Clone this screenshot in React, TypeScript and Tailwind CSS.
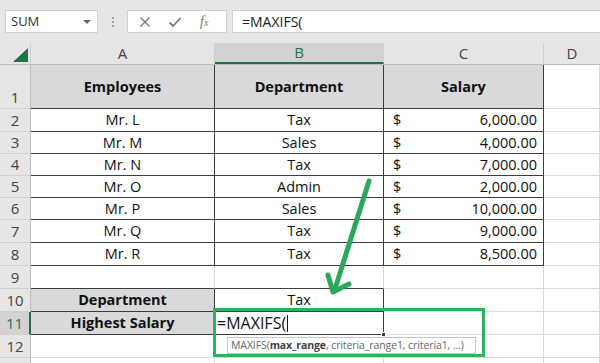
import React from 'react';

type Kind = 'head' | 'data' | 'gap' | 'dept' | 'high' | 'empty';

interface Row {
  n: number;
  h: string;
  kind: Kind;
  a?: string;
  b?: string;
  amt?: string;
}

const rows: Row[] = [
  { n: 1, h: 'h-[44px]', kind: 'head', a: 'Employees', b: 'Department', amt: 'Salary' },
  { n: 2, h: 'h-[23px]', kind: 'data', a: 'Mr. L', b: 'Tax', amt: '6,000.00' },
  { n: 3, h: 'h-[22px]', kind: 'data', a: 'Mr. M', b: 'Sales', amt: '4,000.00' },
  { n: 4, h: 'h-[22px]', kind: 'data', a: 'Mr. N', b: 'Tax', amt: '7,000.00' },
  { n: 5, h: 'h-[22px]', kind: 'data', a: 'Mr. O', b: 'Admin', amt: '2,000.00' },
  { n: 6, h: 'h-[22px]', kind: 'data', a: 'Mr. P', b: 'Sales', amt: '10,000.00' },
  { n: 7, h: 'h-[23px]', kind: 'data', a: 'Mr. Q', b: 'Tax', amt: '9,000.00' },
  { n: 8, h: 'h-[23px]', kind: 'data', a: 'Mr. R', b: 'Tax', amt: '8,500.00' },
  { n: 9, h: 'h-[23px]', kind: 'gap' },
  { n: 10, h: 'h-[23px]', kind: 'dept', a: 'Department', b: 'Tax' },
  { n: 11, h: 'h-[23px]', kind: 'high', a: 'Highest Salary', b: '=MAXIFS(' },
  { n: 12, h: 'h-[23px]', kind: 'empty' },
  { n: 13, h: 'h-[23px]', kind: 'empty' },
];

const dark = 'border-[#3c3c3c]';
const grid = 'border-[#dadada]';

function RowHeader({ n }: { n: number }) {
  const selected = n === 11;
  return (
    <div
      className={`w-[31px] shrink-0 flex items-end justify-center pb-[1px] text-[15px] leading-[19px] border-b border-b-[#d0d0d0] ${
        selected
          ? 'bg-[#d2d2d2] text-[#217346] border-r-2 border-r-[#217346]'
          : 'bg-[#e6e6e6] text-[#444] border-r border-r-[#bdbdbd]'
      }`}
    >
      {n < 13 ? n : null}
    </div>
  );
}

function SheetRow({ row }: { row: Row }) {
  const { kind } = row;
  const inTable = kind === 'head' || kind === 'data';
  const boxed = kind === 'dept' || kind === 'high';

  const aBorder =
    inTable || boxed
      ? `border-r border-b ${dark}`
      : kind === 'gap'
        ? `border-r ${grid} border-b border-b-[#3c3c3c]`
        : `border-r border-b ${grid}`;
  const cBorder = inTable ? `border-r border-b ${dark}` : `border-r border-b ${grid}`;
  const grayBg = kind === 'head' || boxed ? 'bg-[#d9d9d9]' : 'bg-white';

  return (
    <div className={`flex ${row.h}`}>
      <RowHeader n={row.n} />
      <div
        className={`w-[184px] shrink-0 flex items-center justify-center text-[#111] ${aBorder} ${grayBg} ${
          kind === 'head' || boxed ? 'font-bold text-[14.5px]' : 'text-[14.5px]'
        }`}
      >
        {row.a}
      </div>
      <div
        className={`w-[169px] shrink-0 flex items-center text-[14.5px] text-[#111] ${aBorder} ${
          kind === 'head' ? 'bg-[#d9d9d9] font-bold' : 'bg-white'
        } ${kind === 'high' ? 'justify-start pl-[2px] relative' : 'justify-center'}`}
      >
        {kind === 'high' ? (
          <>
            <span className="text-[16px]">{row.b}</span>
            <span className="w-px h-[17px] bg-[#111] ml-[1px]" />
            <span className="absolute right-[-3px] bottom-[-3px] w-[5px] h-[5px] bg-[#3c3c3c] border border-white" />
          </>
        ) : (
          row.b
        )}
      </div>
      <div
        className={`w-[160px] shrink-0 flex items-center text-[14.5px] text-[#111] ${cBorder} ${
          kind === 'head' ? 'bg-[#d9d9d9] font-bold justify-center' : 'bg-white justify-between pl-[9px] pr-[6px]'
        }`}
      >
        {kind === 'head' ? row.amt : kind === 'data' ? (
          <>
            <span>$</span>
            <span>{row.amt}</span>
          </>
        ) : null}
      </div>
      <div className={`flex-1 bg-white border-r border-b ${grid}`} />
    </div>
  );
}

function Toolbar() {
  return (
    <div className="h-[43px] bg-[#e6e6e6] flex items-center pl-[5px]">
      <div className="w-[93px] h-[23px] bg-white border border-[#d0d0d0] flex items-center justify-between pl-[5px] pr-[6px]">
        <span className="text-[13px] text-[#333]">SUM</span>
        <span className="w-0 h-0 border-l-[4px] border-r-[4px] border-t-[4px] border-l-transparent border-r-transparent border-t-[#666]" />
      </div>
      <div className="w-[29px] flex flex-col items-center gap-[2px]">
        <span className="w-[2px] h-[2px] bg-[#a0a0a0]" />
        <span className="w-[2px] h-[2px] bg-[#a0a0a0]" />
        <span className="w-[2px] h-[2px] bg-[#a0a0a0]" />
      </div>
      <div className="w-[100px] h-[23px] bg-white border border-[#d0d0d0] flex items-center pl-[11px] gap-[17px]">
        <svg width="12" height="12" viewBox="0 0 12 12">
          <path d="M1.5 1.5 L10.5 10.5 M10.5 1.5 L1.5 10.5" stroke="#7a7a7a" strokeWidth="1.4" fill="none" />
        </svg>
        <svg width="14" height="12" viewBox="0 0 14 12">
          <path d="M1.5 6.5 L5 10 L12.5 2" stroke="#7a7a7a" strokeWidth="1.8" fill="none" />
        </svg>
        <span className="font-['Liberation_Serif',serif] italic text-[14px] text-[#777] leading-none ml-[1px]">
          f<span className="text-[10px]">x</span>
        </span>
      </div>
      <div className="ml-[5px] flex-1 h-[23px] bg-white border-y border-l border-[#d0d0d0] flex items-center pl-[9px]">
        <span className="text-[14px] text-[#222]">=MAXIFS(</span>
      </div>
    </div>
  );
}

function ColumnHeaders() {
  const cols = [
    { l: 'A', w: 'w-[184px]', sel: false },
    { l: 'B', w: 'w-[169px]', sel: true },
    { l: 'C', w: 'w-[160px]', sel: false },
  ];
  return (
    <div className="h-[22px] flex bg-[#e6e6e6] border-b border-[#bdbdbd]">
      <div className="w-[31px] shrink-0 relative border-r border-[#cfcfcf]">
        <svg className="absolute left-[13px] top-[5px]" width="15" height="14" viewBox="0 0 15 14">
          <polygon points="15,0 15,14 0,14" fill="#217346" />
        </svg>
      </div>
      {cols.map((c) => (
        <div
          key={c.l}
          className={`${c.w} shrink-0 flex items-center justify-center text-[15px] border-r border-[#cfcfcf] ${
            c.sel ? 'bg-[#d2d2d2] text-[#217346] border-b-2 border-b-[#217346]' : 'text-[#444]'
          }`}
        >
          {c.l}
        </div>
      ))}
      <div className="flex-1 flex items-center justify-center text-[15px] text-[#444]">D</div>
    </div>
  );
}

export default function App() {
  return (
    <div className="relative w-[600px] h-[363px] overflow-hidden bg-white font-['Open_Sans',sans-serif]">
      <Toolbar />
      <ColumnHeaders />
      <div>
        {rows.map((r) => (
          <SheetRow key={r.n} row={r} />
        ))}
      </div>

      {/* annotation: green box around the formula cell */}
      <div className="absolute left-[213px] top-[308px] w-[272px] h-[49px] border-[3px] border-[#2db35f]" />

      {/* function hint */}
      <div className="absolute left-[227px] top-[337px] w-[249px] h-[17px] bg-white border border-[#c4c4c4] flex items-center pl-[3px] text-[10.5px] tracking-[-0.1px] text-[#666] whitespace-nowrap">
        MAXIFS(<span className="font-bold text-[#444]">max_range</span>, criteria_range1, criteria1, ...)
      </div>

      {/* arrow */}
      <svg className="absolute left-0 top-0 pointer-events-none" width="600" height="363">
        <path d="M369 181 L335 289" stroke="#2aa95a" strokeWidth="5" strokeLinecap="round" fill="none" />
        <path d="M328 275 L333 292 L349 284" stroke="#2aa95a" strokeWidth="5" strokeLinecap="round" strokeLinejoin="round" fill="none" />
      </svg>
    </div>
  );
}
